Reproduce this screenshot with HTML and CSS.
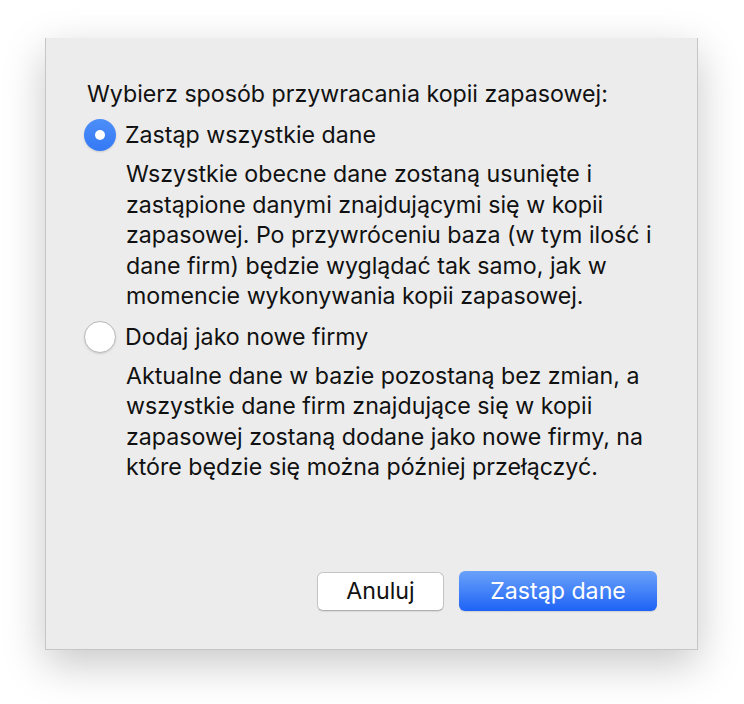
FILE: index.html
```html
<!DOCTYPE html>
<html lang="pl">
<head>
    <meta charset="UTF-8">
    <title>Przywracanie kopii zapasowej</title>
    <link rel="stylesheet" href="styles.css">
</head>
<body>
    <div class="sheet">
        <div class="content">
            <p class="title">Wybierz sposób przywracania kopii zapasowej:</p>
            <label class="option">
                <span class="radio checked"></span>
                <span class="label">Zastąp wszystkie dane</span>
            </label>
            <p class="desc">
                Wszystkie obecne dane zostaną usunięte i<br>
                zastąpione danymi znajdującymi się w kopii<br>
                zapasowej. Po przywróceniu baza (w tym ilość i<br>
                dane firm) będzie wyglądać tak samo, jak w<br>
                momencie wykonywania kopii zapasowej.
            </p>
            <label class="option">
                <span class="radio"></span>
                <span class="label">Dodaj jako nowe firmy</span>
            </label>
            <p class="desc">
                Aktualne dane w bazie pozostaną bez zmian, a<br>
                wszystkie dane firm znajdujące się w kopii<br>
                zapasowej zostaną dodane jako nowe firmy, na<br>
                które będzie się można później przełączyć.
            </p>
        </div>
        <div class="buttons">
            <button class="btn">Anuluj</button>
            <button class="btn default">Zastąp dane</button>
        </div>
    </div>
</body>
</html>
```

FILE: styles.css
```css
html, body {
    margin: 0;
    background: #ffffff;
}
body {
    font-family: Inter, "Liberation Sans", sans-serif;
    color: #111111;
    font-size: 23.2px;
    min-height: 704px;
    padding-top: 38px;
    box-sizing: border-box;
}
.sheet {
    box-sizing: border-box;
    margin-left: 45px;
    width: 653px;
    height: 612px;
    background: #ececec;
    border: 1px solid #c6c6c6;
    border-top: none;
    box-shadow: 0 14px 40px rgba(0, 0, 0, 0.22);
    display: flex;
    flex-direction: column;
    justify-content: space-between;
    padding: 41px 40px 38px 38px;
}
.title {
    margin: 0 0 0 3px;
    line-height: 31px;
}
.option {
    display: flex;
    align-items: center;
    gap: 9px;
    height: 32px;
    margin-top: 9px;
}
.radio {
    box-sizing: border-box;
    width: 32px;
    height: 32px;
    border-radius: 50%;
    background: #ffffff;
    border: 1px solid #b9b9b9;
    box-shadow: 0 1px 2px rgba(0, 0, 0, 0.12);
    position: relative;
}
.radio.checked {
    border: none;
    background: linear-gradient(#4d8ef8, #3479f5);
    box-shadow: 0 1px 2px rgba(0, 0, 0, 0.15);
}
.radio.checked::after {
    content: "";
    position: absolute;
    left: 11px;
    top: 11px;
    width: 10px;
    height: 10px;
    border-radius: 50%;
    background: #ffffff;
}
.desc {
    margin: 8px 0 0 42px;
    line-height: 30.5px;
}
.buttons {
    display: flex;
    justify-content: flex-end;
    align-items: center;
    gap: 15px;
}
.btn {
    font-family: inherit;
    font-size: 23.2px;
    color: #111111;
    height: 39px;
    width: 127px;
    background: #ffffff;
    border: 1px solid #c4c4c4;
    border-bottom-color: #b0b0b0;
    border-radius: 6px;
    box-shadow: 0 1px 1px rgba(0, 0, 0, 0.08);
    padding: 0;
}
.btn.default {
    width: 198px;
    height: 40px;
    color: #ffffff;
    border: none;
    background: linear-gradient(#6aa2f9, #1e63f6);
    box-shadow: 0 1px 1px rgba(0, 0, 0, 0.12);
}
```
